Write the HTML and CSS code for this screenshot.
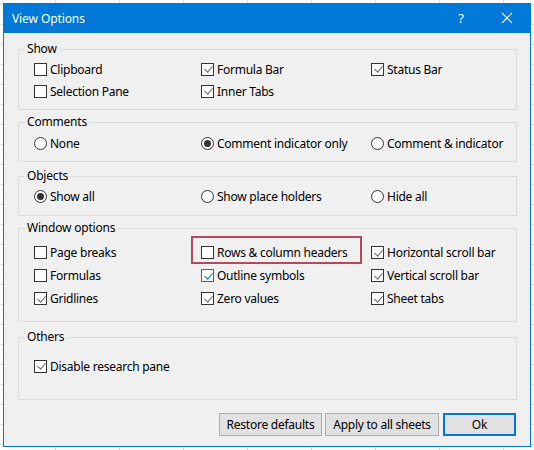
FILE: index.html
```html
<!DOCTYPE html>
<html>
<head>
<meta charset="utf-8">
<link rel="stylesheet" href="styles.css">
</head>
<body>
<div class="dialog">
  <div class="titlebar">
    <span class="title">View Options</span>
    <span class="help">?</span>
    <span class="close"><svg width="12" height="12" viewBox="0 0 12 12"><path d="M1 1 L11 11 M11 1 L1 11" stroke="#fff" stroke-width="1.1" fill="none"/></svg></span>
  </div>
  <div class="content">
    <div class="group g-show">
      <span class="legend">Show</span>
      <div class="grid">
        <label class="opt"><span class="cb"></span>Clipboard</label>
        <label class="opt"><span class="cb on"></span>Formula Bar</label>
        <label class="opt"><span class="cb on"></span>Status Bar</label>
        <label class="opt"><span class="cb"></span>Selection Pane</label>
        <label class="opt"><span class="cb on"></span>Inner Tabs</label>
      </div>
    </div>
    <div class="group g-comments">
      <span class="legend">Comments</span>
      <div class="grid">
        <label class="opt"><span class="rd"></span>None</label>
        <label class="opt"><span class="rd on"></span>Comment indicator only</label>
        <label class="opt"><span class="rd"></span>Comment &amp; indicator</label>
      </div>
    </div>
    <div class="group g-objects">
      <span class="legend">Objects</span>
      <div class="grid">
        <label class="opt"><span class="rd on"></span>Show all</label>
        <label class="opt"><span class="rd"></span>Show place holders</label>
        <label class="opt"><span class="rd"></span>Hide all</label>
      </div>
    </div>
    <div class="group g-window">
      <span class="legend">Window options</span>
      <div class="grid tall">
        <label class="opt"><span class="cb"></span>Page breaks</label>
        <label class="opt hl"><span class="cb"></span>Rows &amp; column headers<span class="mark"></span></label>
        <label class="opt"><span class="cb on"></span>Horizontal scroll bar</label>
        <label class="opt"><span class="cb"></span>Formulas</label>
        <label class="opt"><span class="cb on blue"></span>Outline symbols</label>
        <label class="opt"><span class="cb on"></span>Vertical scroll bar</label>
        <label class="opt"><span class="cb on"></span>Gridlines</label>
        <label class="opt"><span class="cb on"></span>Zero values</label>
        <label class="opt"><span class="cb on"></span>Sheet tabs</label>
      </div>
    </div>
    <div class="group g-others">
      <span class="legend">Others</span>
      <div class="grid">
        <label class="opt"><span class="cb on"></span>Disable research pane</label>
      </div>
    </div>
    <div class="buttons">
      <button class="btn b-restore">Restore defaults</button>
      <button class="btn b-apply">Apply to all sheets</button>
      <button class="btn b-ok">Ok</button>
    </div>
  </div>
</div>
</body>
</html>
```
FILE: styles.css
```css
* { box-sizing: border-box; }
html, body { margin: 0; padding: 0; }
body {
  width: 534px;
  height: 450px;
  overflow: hidden;
  background-color: #ffffff;
  background-image:
    linear-gradient(to right, #d9d9d9 1px, transparent 1px),
    linear-gradient(to bottom, #e1e1e1 1px, transparent 1px);
  background-size: 64px 20px, 64px 20px;
  background-position: 55px 0, 0 4px;
  font-family: "Noto Sans", "Open Sans", sans-serif;
  font-size: 12px;
  color: #000;
  padding: 3px 0 0 3px;
}
.dialog {
  width: 528px;
  height: 444px;
  border: 1px solid #0078d7;
  background: #f0f0f0;
  display: flex;
  flex-direction: column;
}
.titlebar {
  height: 30px;
  background: #0078d7;
  color: #fff;
  display: flex;
  align-items: center;
  margin: -1px -1px 0 -1px;
  padding-left: 9px;
  flex-shrink: 0;
}
.title { flex: 1; font-size: 12px; letter-spacing: -0.1px; }
.help { width: 20px; text-align: center; margin-right: 30px; font-size: 13px; }
.close { width: 12px; height: 12px; margin-right: 18px; display: flex; }
.content {
  padding: 16px 13px 0 14px;
  display: flex;
  flex-direction: column;
  gap: 12px;
}
.group {
  position: relative;
  border: 1px solid #dcdcdc;
}
.legend {
  position: absolute;
  top: -10px;
  left: 6px;
  padding: 0 2px;
  background: #f0f0f0;
  line-height: 18px;
  letter-spacing: -0.2px;
}
.grid {
  display: grid;
  grid-template-columns: 167px 170px 1fr;
  grid-auto-rows: 22px;
  padding-left: 15px;
}
.grid.tall { grid-auto-rows: 23px; }
.g-show .grid { padding-top: 8px; padding-bottom: 7px; }
.g-comments .grid { padding-top: 9px; padding-bottom: 7px; }
.g-objects { margin-top: 2px; }
.g-objects .grid { padding-top: 8px; padding-bottom: 8px; }
.g-window .grid { padding-top: 12px; padding-bottom: 11px; }
.g-others { margin-top: 3px; }
.g-others .grid { padding-top: 17px; padding-bottom: 22px; }
.opt {
  display: flex;
  align-items: center;
  white-space: nowrap;
  position: relative;
  letter-spacing: -0.25px;
}
.cb {
  width: 13px;
  height: 13px;
  border: 1px solid #333;
  background: #fff;
  margin-right: 3px;
  flex-shrink: 0;
  position: relative;
}
.cb.on::after {
  content: "";
  position: absolute;
  width: 4px;
  height: 7px;
  border-right: 1.3px solid #666;
  border-bottom: 1.3px solid #666;
  transform: rotate(40deg);
  transform-origin: center;
  left: 3.5px;
  top: 0.5px;
}
.cb.blue { border-color: #0078d7; }
.cb.blue.on::after { border-color: #0078d7; }
.rd {
  width: 13px;
  height: 13px;
  border: 1px solid #333;
  border-radius: 50%;
  background: #fff;
  margin-right: 3px;
  flex-shrink: 0;
  display: flex;
  align-items: center;
  justify-content: center;
}
.rd.on::after {
  content: "";
  width: 7px;
  height: 7px;
  border-radius: 50%;
  background: #333;
}
.mark {
  position: absolute;
  left: -10px;
  top: -5px;
  width: 171px;
  height: 28px;
  border: 2px solid #b5485f;
  pointer-events: none;
}
.buttons {
  display: flex;
  justify-content: flex-end;
  gap: 3px;
  padding-right: 1px;
  margin-top: 1px;
}
.btn {
  height: 23px;
  font-family: inherit;
  font-size: 12px;
  letter-spacing: -0.25px;
  background: #e1e1e1;
  border: 1px solid #adadad;
  color: #000;
  padding: 0;
}
.b-restore { width: 103px; }
.b-apply { width: 114px; }
.b-ok { width: 73px; border: 2px solid #0078d7; margin-left: 1px; }
```
